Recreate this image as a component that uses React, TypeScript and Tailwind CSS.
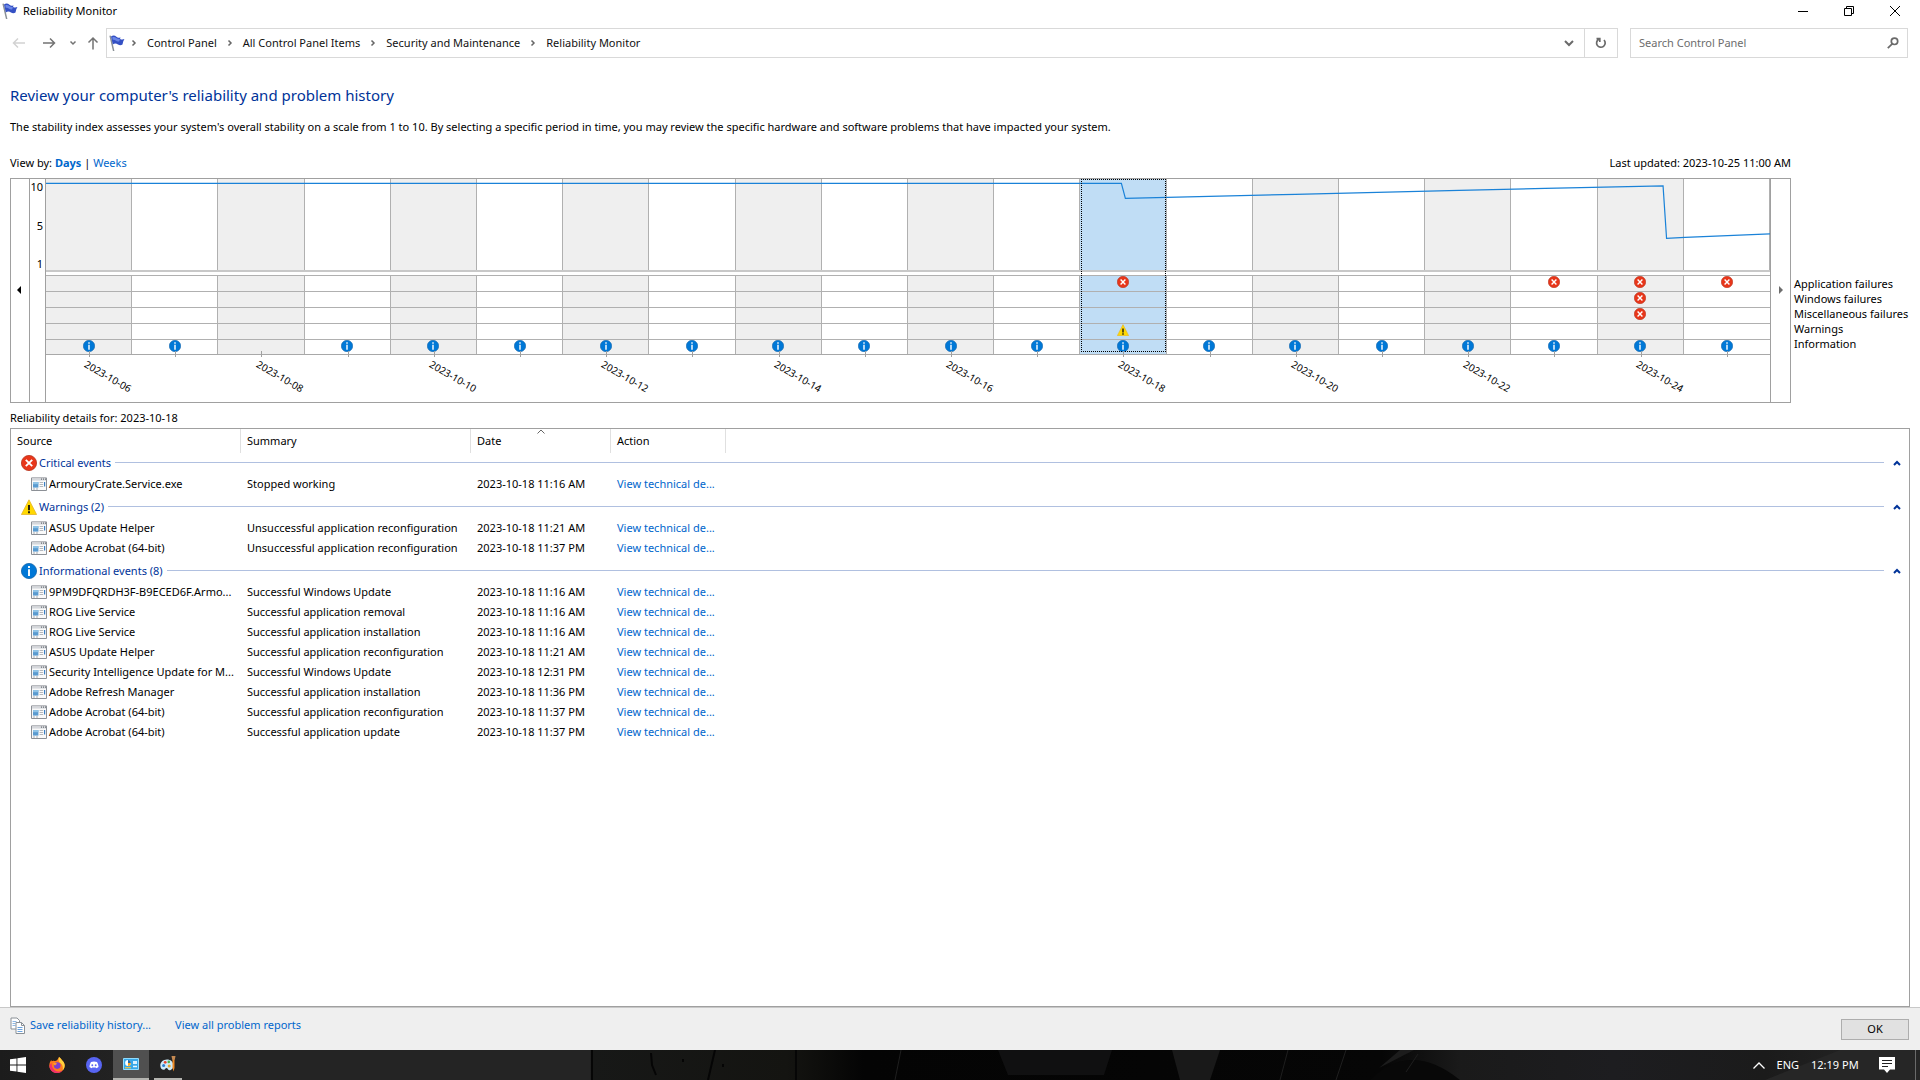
import type { ReactNode } from "react";

type Status = "critical" | "warning" | "info";

interface EventRow {
  source: string;
  summary: string;
  date: string;
}

interface EventGroup {
  status: Status;
  title: string;
  rows: EventRow[];
}

interface Day {
  label?: string;
  selected?: boolean;
  marks: (Status | null)[];
}

const none: null[] = [null, null, null, null];

const days: Day[] = [
  { label: "2023-10-06", marks: [...none, "info"] },
  { marks: [...none, "info"] },
  { label: "2023-10-08", marks: [...none, null] },
  { marks: [...none, "info"] },
  { label: "2023-10-10", marks: [...none, "info"] },
  { marks: [...none, "info"] },
  { label: "2023-10-12", marks: [...none, "info"] },
  { marks: [...none, "info"] },
  { label: "2023-10-14", marks: [...none, "info"] },
  { marks: [...none, "info"] },
  { label: "2023-10-16", marks: [...none, "info"] },
  { marks: [...none, "info"] },
  { label: "2023-10-18", selected: true, marks: ["critical", null, null, "warning", "info"] },
  { marks: [...none, "info"] },
  { label: "2023-10-20", marks: [...none, "info"] },
  { marks: [...none, "info"] },
  { label: "2023-10-22", marks: [...none, "info"] },
  { marks: ["critical", null, null, null, "info"] },
  { label: "2023-10-24", marks: ["critical", "critical", "critical", null, "info"] },
  { marks: ["critical", null, null, null, "info"] },
];

const groups: EventGroup[] = [
  {
    status: "critical",
    title: "Critical events",
    rows: [{ source: "ArmouryCrate.Service.exe", summary: "Stopped working", date: "2023-10-18 11:16 AM" }],
  },
  {
    status: "warning",
    title: "Warnings (2)",
    rows: [
      { source: "ASUS Update Helper", summary: "Unsuccessful application reconfiguration", date: "2023-10-18 11:21 AM" },
      { source: "Adobe Acrobat (64-bit)", summary: "Unsuccessful application reconfiguration", date: "2023-10-18 11:37 PM" },
    ],
  },
  {
    status: "info",
    title: "Informational events (8)",
    rows: [
      { source: "9PM9DFQRDH3F-B9ECED6F.Armo...", summary: "Successful Windows Update", date: "2023-10-18 11:16 AM" },
      { source: "ROG Live Service", summary: "Successful application removal", date: "2023-10-18 11:16 AM" },
      { source: "ROG Live Service", summary: "Successful application installation", date: "2023-10-18 11:16 AM" },
      { source: "ASUS Update Helper", summary: "Successful application reconfiguration", date: "2023-10-18 11:21 AM" },
      { source: "Security Intelligence Update for M...", summary: "Successful Windows Update", date: "2023-10-18 12:31 PM" },
      { source: "Adobe Refresh Manager", summary: "Successful application installation", date: "2023-10-18 11:36 PM" },
      { source: "Adobe Acrobat (64-bit)", summary: "Successful application reconfiguration", date: "2023-10-18 11:37 PM" },
      { source: "Adobe Acrobat (64-bit)", summary: "Successful application update", date: "2023-10-18 11:37 PM" },
    ],
  },
];

const legend = ["Application failures", "Windows failures", "Miscellaneous failures", "Warnings", "Information"];
const crumbs = ["Control Panel", "All Control Panel Items", "Security and Maintenance", "Reliability Monitor"];

function StatusIcon({ status, className }: { status: Status; className: string }) {
  if (status === "critical") {
    return (
      <svg viewBox="0 0 16 16" className={className} aria-label="Critical">
        <circle cx="8" cy="8" r="7.6" fill="#e8361a" stroke="#b8321c" strokeWidth="0.8" />
        <path d="M4.8 4.8l6.4 6.4M11.2 4.8l-6.4 6.4" stroke="#fff" strokeWidth="1.9" />
      </svg>
    );
  }
  if (status === "warning") {
    return (
      <svg viewBox="0 0 16 16" className={className} aria-label="Warning">
        <path d="M8 .8L15.6 15.5H.4z" fill="#ffd800" stroke="#e5b52a" strokeWidth="0.8" strokeLinejoin="round" />
        <path d="M8 6v5.2M8 12.2v2" stroke="#111" strokeWidth="1.8" />
      </svg>
    );
  }
  return (
    <svg viewBox="0 0 16 16" className={className} aria-label="Information">
      <circle cx="8" cy="8" r="7.6" fill="#0078d7" stroke="#1264ab" strokeWidth="0.8" />
      <path d="M8 3v1.9M8 6.2v6.8" stroke="#fff" strokeWidth="1.9" />
    </svg>
  );
}

function FlagIcon() {
  return (
    <svg viewBox="0 0 16 16" className="size-4 shrink-0" aria-hidden="true">
      <path d="M1.2 1.2L4.6 15.6" stroke="#8a9096" strokeWidth="1.5" strokeLinecap="round" />
      <path d="M2 1.4C4.2.2 5.8.4 7.4 1.8s3 1 4 .4l-.3 1.7c1.4.8 2.6.8 4.3.2-.9 1.6-1.6 3.4-1.9 5.4-1.5.9-3 .9-4.5 0-1.9-1.2-3.6-1.2-5.2.1z" fill="#3450c4" />
      <path d="M3.2 2.4c1.7-.7 2.9-.3 4.1.7 1.2.9 2.5 1.2 3.6.9l-.6 2.2c-1.3.4-2.4.1-3.6-.7-1-.7-1.8-.9-2.8-.6z" fill="#6a86e6" />
    </svg>
  );
}

function AppIcon() {
  return (
    <svg viewBox="0 0 16 14" className="h-3.5 w-4 shrink-0" aria-hidden="true">
      <path d="M.5.9h15v12.6H.5z" fill="#fafafa" stroke="#8c9096" />
      <path d="M1 1.4h14v2.2H1z" fill="#d5d8dc" />
      <path d="M10 2.1h1M12 2.1h1M14 2.1h1" stroke="#4c5258" />
      <path d="M2 5h5.4v5.6H2z" fill="#5a9bd0" />
      <path d="M2 5h5.4v2.2H2z" fill="#8fc3e6" />
      <path d="M8.6 5.5h3.6M8.6 7.5h3.6M8.6 9.5h3.6" stroke="#b4b8bd" />
      <path d="M13.6 5v4.5" stroke="#3a7fc4" strokeWidth="1.2" />
      <path d="M2 12h2M5 12h2" stroke="#a8adb3" />
    </svg>
  );
}

function NavIcon({ d, className }: { d: string; className: string }) {
  return (
    <svg viewBox="0 0 14 14" fill="none" stroke="currentColor" className={className} aria-hidden="true">
      <path d={d} />
    </svg>
  );
}

function IconButton({ label, className, children }: { label: string; className: string; children: ReactNode }) {
  return (
    <button type="button" aria-label={label} className={"flex items-center justify-center " + className}>
      {children}
    </button>
  );
}

function TitleBar() {
  return (
    <header className="flex h-[22px] items-center pr-0.5 pl-0.5">
      <FlagIcon />
      <span className="ml-[5px] leading-4">Reliability Monitor</span>
      <div className="ml-auto flex">
        <IconButton label="Minimize" className="h-5 w-[46px]">
          <svg viewBox="0 0 10 10" className="size-2.5" stroke="#000"><path d="M0 5.5h10" /></svg>
        </IconButton>
        <IconButton label="Restore" className="h-5 w-[46px]">
          <svg viewBox="0 0 10 10" className="size-2.5" stroke="#000" fill="none"><path d="M.5 2.5h7v7h-7zM2.5 2.5v-2h7v7h-2" /></svg>
        </IconButton>
        <IconButton label="Close" className="h-5 w-[46px]">
          <svg viewBox="0 0 10 10" className="size-2.5" stroke="#000"><path d="M0 0l10 10M10 0L0 10" /></svg>
        </IconButton>
      </div>
    </header>
  );
}

function AddressBar() {
  return (
    <nav className="flex h-[30px] items-stretch pr-3" aria-label="Address">
      <div className="flex w-[106px] shrink-0 items-center pl-3">
        <IconButton label="Back" className="w-3.5 text-[#d2d2d2]">
          <NavIcon d="M13 7H1.5M6 2.5L1.5 7 6 11.5" className="size-3.5 stroke-[1.5]" />
        </IconButton>
        <IconButton label="Forward" className="ml-4 w-3.5 text-[#737373]">
          <NavIcon d="M1 7h11.5M8 2.5L12.500 7 8 11.500" className="size-3.5 stroke-[1.5]" />
        </IconButton>
        <IconButton label="Recent locations" className="ml-2.5 w-3.5 text-[#737373]">
          <NavIcon d="M4.500 5.500L7 8l2.500-2.500" className="size-3.5 stroke-[1.5]" />
        </IconButton>
        <IconButton label="Up" className="ml-1.5 w-3.5 text-[#737373]">
          <NavIcon d="M7 13.500V2M2.500 6.500L7 2l4.500 4.500" className="size-3.5 stroke-[1.5]" />
        </IconButton>
      </div>
      <div className="flex flex-1 items-center border border-[#d9d9d9] pl-0.5">
        <FlagIcon />
        <ol className="-ml-1 flex items-center">
          {crumbs.map((crumb) => (
            <li key={crumb} className="flex items-center text-[#111]">
              <NavIcon d="M5.500 4.500L8 7l-2.500 2.500" className="mx-1.5 size-3.5 stroke-[1.5] text-[#666]" />
              <a href="#" className="leading-4">{crumb}</a>
            </li>
          ))}
        </ol>
        <IconButton label="Previous locations" className="ml-auto w-[30px] text-[#6a6a6a]">
          <NavIcon d="M3 5l4 4 4-4" className="size-3.5 stroke-2" />
        </IconButton>
      </div>
      <IconButton label="Refresh" className="w-[34px] border border-[#d9d9d9] -ml-px text-[#6a6a6a]">
        <NavIcon d="M4.800 3.200A4.300 4.300 0 1 0 10 4M2.500 2.700h3.300v3.300" className="size-3.5 stroke-[1.7]" />
      </IconButton>
      <div className="ml-3 flex w-[278px] items-center border border-[#d9d9d9] pr-2 pl-2">
        <input
          type="search"
          aria-label="Search Control Panel"
          placeholder="Search Control Panel"
          className="min-w-0 flex-1 leading-4 outline-none placeholder:text-[#6d6d6d]"
        />
        <svg viewBox="0 0 12 12" className="size-3" fill="none" stroke="#6a6a6a" strokeWidth="1.700" aria-hidden="true">
          <circle cx="7.500" cy="4.300" r="3.200" />
          <path d="M5.200 6.800L.8 11.200" />
        </svg>
      </div>
    </nav>
  );
}

function dayFill(day: Day, index: number) {
  if (day.selected) return "bg-[#c0ddf5]";
  return index % 2 === 0 ? "bg-[#efefef]" : "bg-white";
}

function StabilityChart() {
  return (
    <section aria-label="Stability chart" className="flex h-[225px] min-w-0 flex-1 border border-[#a0a0a0]">
      <IconButton label="Earlier" className="w-[19px] border-r border-[#a0a0a0] pr-0.5 pb-0.5">
        <svg viewBox="0 0 4 8" className="h-2 w-1"><path d="M4 0v8L0 4z" fill="#000" /></svg>
      </IconButton>
      <div className="flex h-[93px] w-[15px] flex-col items-end justify-between pr-0.5 leading-4">
        <span>10</span>
        <span>5</span>
        <span>1</span>
      </div>
      <div className="min-w-0 flex-1 border-x border-[#a0a0a0]">
        <div className="relative">
          <div className="relative grid h-[93px] grid-cols-20 border-b-2 border-[#c8c8c8]">
            {days.map((day, i) => (
              <div key={i} className={"border-[#b0b0b0] not-last:border-r " + dayFill(day, i)} />
            ))}
            <svg viewBox="0 0 1725 92" preserveAspectRatio="none" className="absolute inset-0 size-full" aria-hidden="true">
              <path
                d="M0 4.500H1076L1080 19.500L1250 15.500L1414 11.500L1500 9.500L1618 7L1621.500 60L1640 59L1725 55.500"
                fill="none"
                stroke="#1a82d8"
                strokeWidth="1.200"
                vectorEffect="non-scaling-stroke"
              />
            </svg>
          </div>
          <div className="mt-[3px] grid grid-cols-20 border-b border-[#a8a8a8]">
            {days.map((day, i) => (
              <div key={i} className={"border-[#b0b0b0] not-last:border-r " + dayFill(day, i)}>
                {day.marks.map((mark, row) => (
                  <div key={row} className="flex h-4 justify-center border-t border-[#b0b0b0] last:h-[15px]">
                    {mark && <StatusIcon status={mark} className="size-3" />}
                  </div>
                ))}
              </div>
            ))}
          </div>
          <div className="absolute inset-0 grid grid-cols-20 pb-[3px]" aria-hidden="true">
            <div className="col-start-13 mr-px ml-px border border-dotted border-black" />
          </div>
        </div>
        <div className="grid grid-cols-20">
          {days.map((day, i) => (
            <div key={i} className="relative">
              <span className="absolute -top-1 left-1/2 h-1.5 w-px bg-[#a0a0a0]" />
              {day.label && (
                <span className="absolute top-0.5 left-1/2 origin-top-left rotate-30 text-[10px] leading-[15px] whitespace-nowrap">
                  {day.label}
                </span>
              )}
            </div>
          ))}
        </div>
      </div>
      <IconButton label="Later" className="w-[19px] pb-0.5">
        <svg viewBox="0 0 4 8" className="h-2 w-1"><path d="M0 0v8l4-4z" fill="#6d6d6d" /></svg>
      </IconButton>
    </section>
  );
}

function DetailsTable() {
  return (
    <div className="mt-0.5 flex-1 border border-[#a0a0a0]">
      <table className="w-full table-fixed border-separate border-spacing-0 text-left whitespace-nowrap">
        <colgroup>
          <col className="w-[230px]" />
          <col className="w-[230px]" />
          <col className="w-[140px]" />
          <col className="w-[115px]" />
          <col />
        </colgroup>
        <thead>
          <tr className="h-6">
            <th className="border-r border-[#e0e0e0] px-1.5 py-0 font-normal">Source</th>
            <th className="border-r border-[#e0e0e0] px-1.5 py-0 font-normal">Summary</th>
            <th className="relative border-r border-[#e0e0e0] px-1.5 py-0 font-normal" aria-sort="ascending">
              Date
              <svg viewBox="0 0 8 5" className="absolute top-0 left-1/2 h-[5px] w-2 -translate-x-1/2" fill="none" stroke="#666">
                <path d="M.5 4.500L4 1l3.500 3.500" />
              </svg>
            </th>
            <th className="border-r border-[#e0e0e0] px-1.5 py-0 font-normal">Action</th>
            <td />
          </tr>
        </thead>
        {groups.map((group, g) => (
          <tbody key={group.title}>
            <tr className={g === 0 ? "h-[21px]" : "h-6"}>
              <th colSpan={5} scope="rowgroup" className="p-0 align-bottom font-normal">
                <div className="flex h-[21px] items-center pr-[5px] pb-0.5 pl-2.5">
                  <StatusIcon status={group.status} className="size-4 shrink-0" />
                  <span className="ml-0.5 leading-4 text-[#003399]">{group.title}</span>
                  <span className="ml-1 h-px flex-1 bg-[#b0c0e0]" />
                  <IconButton label={"Collapse " + group.title} className="ml-1.5 h-4 w-3.5">
                    <svg viewBox="0 0 8 6" className="h-1.5 w-2" fill="none" stroke="#003399" strokeWidth="2"><path d="M1 5l3-3 3 3" /></svg>
                  </IconButton>
                </div>
              </th>
            </tr>
            {group.rows.map((row, r) => (
              <tr key={r} className="h-5">
                <td className="p-0">
                  <div className="flex items-center gap-0.5 pl-5">
                    <AppIcon />
                    {row.source}
                  </div>
                </td>
                <td className="px-1.5 py-0">{row.summary}</td>
                <td className="px-1.5 py-0">{row.date}</td>
                <td className="px-1.5 py-0">
                  <a href="#" className="text-[#0066cc]">View technical de...</a>
                </td>
                <td className="p-0" />
              </tr>
            ))}
          </tbody>
        ))}
      </table>
    </div>
  );
}

function Footer() {
  return (
    <footer className="flex h-[43px] items-center border-t border-[#c8c8c8] bg-[#efefef] pr-[11px] pl-2.5">
      <div className="flex items-center pb-2 text-[#0066cc]">
        <svg viewBox="0 0 16 17" className="h-[17px] w-4" aria-hidden="true">
          <path d="M1 1h6l2.500 2.500V12H1z" fill="#fff" stroke="#8a9096" />
          <path d="M2.500 4.500h4M2.500 6.500h3M2.500 8.500h3" stroke="#8eb8e4" />
          <path d="M6 5.500h5.500L14.500 8.500v8H6z" fill="#fff" stroke="#8a9096" />
          <path d="M11.500 5.500v3h3" fill="none" stroke="#8a9096" />
          <path d="M7.500 10.500h5M7.500 12.500h5M7.500 14.500h5" stroke="#6aa2de" />
        </svg>
        <a href="#" className="ml-1 leading-4">Save reliability history...</a>
        <a href="#" className="ml-6 leading-4">View all problem reports</a>
      </div>
      <button type="button" className="ml-auto h-[21px] w-[68px] border border-[#adadad] bg-[#e1e1e1] leading-4">OK</button>
    </footer>
  );
}

function Taskbar() {
  return (
    <div className="relative flex h-[30px] bg-[#1f1f1f] text-white">
      <svg viewBox="0 0 1920 30" preserveAspectRatio="none" className="absolute inset-0 size-full" aria-hidden="true">
        <defs>
          <linearGradient id="wall">
            <stop offset="0" stopColor="#1c1c1c" />
            <stop offset="0.080" stopColor="#242424" />
            <stop offset="0.307" stopColor="#242424" />
            <stop offset="0.309" stopColor="#171817" />
            <stop offset="0.410" stopColor="#141411" />
            <stop offset="0.450" stopColor="#040404" />
            <stop offset="0.600" stopColor="#050505" />
            <stop offset="0.720" stopColor="#060606" />
            <stop offset="0.760" stopColor="#1a1a1a" />
            <stop offset="0.840" stopColor="#1d1d20" />
            <stop offset="0.920" stopColor="#1b1b1b" />
            <stop offset="1" stopColor="#282828" />
          </linearGradient>
        </defs>
        <path d="M0 0h1920v30H0z" fill="url(#wall)" />
        <path d="M998 0h114l-8 25h-96z" fill="#101011" />
        <path d="M1172 0h48l-10 30h-30z" fill="#191919" />
        <path d="M1400 0h14l-35 18z" fill="#1c1c1c" />
        <path d="M1370 30q40-40 90 0z" fill="#080808" />
        <path d="M1765 30L1840 0h80v30z" fill="#262626" />
        <path d="M592 0v30M796 0v30" stroke="#060606" strokeWidth="2" />
        <path d="M651 3l1 12 4 10M683 9v3M723 14v3M715 0l-7 30" fill="none" stroke="#050505" strokeWidth="2" />
        <path d="M1288 0l-8 30M1346 0l-10 30M1418 4l-12 18M901 0l-6 30" stroke="#1e1e1e" />
      </svg>
      <IconButton label="Start" className="relative w-9">
        <svg viewBox="0 0 16 16" className="size-4" fill="#fff">
          <path d="M0 2.300L6.500 1.400v6.100H0zM7.400 1.300L16 0v7.500H7.400zM0 8.400h6.500v6.200L0 13.700zM7.400 8.400H16V16l-8.600-1.200z" />
        </svg>
      </IconButton>
      <IconButton label="Firefox" className="relative ml-[3px] w-9">
        <svg viewBox="0 0 16 16" className="size-4">
          <path d="M10 0c1.500 1 2 2 3 3.200 1.400 1.400 2.700 3 2.700 5.300A7.700 7.500 0 0 1 .3 8.400C.3 6 1.300 4 2.300 3l.4 1.300C3.600 3.500 4.600 3.500 5.500 4 7.800 4.300 9 2 10 0z" fill="#ff7a1f" />
          <path d="M10 0c1.500 1 2 2 3 3.200 1.400 1.400 2.700 3 2.700 5.300 0 2-.8 3.800-2 5 .5-3.600-.2-6-2-7.200C9.600 5 9 3 10 0z" fill="#ffd23c" />
          <path d="M.4 9.500C1 13.500 4 16 8 16c2.500 0 4.400-1 5.800-2.600-3 1.600-6 1.300-8.300-.5C3.300 11.300 2.500 8.500 2.600 6 1.500 7 .6 8 .4 9.500z" fill="#f0306a" />
          <circle cx="8.200" cy="8.600" r="3.300" fill="#7a3fd0" />
          <path d="M4.200 6.300c1.600-.9 3-.4 4 .6-1 .2-1.500.8-2 1.700-.8-.3-1.600-1-2-2.300z" fill="#ff9a2a" />
        </svg>
      </IconButton>
      <IconButton label="Discord" className="relative ml-px w-9">
        <svg viewBox="0 0 16 16" className="size-4">
          <circle cx="8" cy="8" r="8" fill="#5865f2" />
          <path d="M5 4.900c2-.7 4-.7 6 0 .9 1.500 1.500 3.200 1.500 5-.8.700-1.600 1.100-2.500 1.300l-.6-1c-1 .3-1.900.3-2.800 0l-.6 1c-.9-.2-1.700-.6-2.500-1.300 0-1.800.6-3.500 1.500-5z" fill="#fff" />
          <circle cx="6.300" cy="8.200" r="0.950" fill="#5865f2" />
          <circle cx="9.700" cy="8.200" r="0.950" fill="#5865f2" />
        </svg>
      </IconButton>
      <IconButton label="Control Panel" className="relative ml-px w-9 border-b-2 border-[#b4b4b0] bg-[#505050]">
        <svg viewBox="0 0 16 12" className="h-3 w-4">
          <path d="M.5.5h15v11H.5z" fill="#38a8e8" stroke="#8fdcff" />
          <circle cx="5" cy="5" r="2.900" fill="#fff" />
          <path d="M5 5V2.100A2.900 2.900 0 0 1 7.900 5z" fill="#1c6ab0" />
          <path d="M5 5h2.900A2.900 2.900 0 0 1 5 7.900z" fill="#f5a623" />
          <path d="M10 3h4v3h-4z" fill="#d8f1ff" />
          <path d="M2 9.700h6" stroke="#f5c542" strokeWidth="1.200" />
          <path d="M10 8.500h4" stroke="#e8f8ff" strokeWidth="1.500" />
        </svg>
      </IconButton>
      <IconButton label="Paint" className="relative ml-[5px] w-7 border-b-2 border-[#b4b4b0]">
        <svg viewBox="0 0 16 16" className="size-4">
          <path d="M7 3.500C3 3.500.3 6.300.3 9.500c0 3 2 4.700 4 4.200 1-.3 1-1.700 2.200-1.700 1.400 0 1 2 2.800 2.200 2.400.1 4.200-2.500 4-5.300C13.100 5.700 10.600 3.500 7 3.500z" fill="#cdeaf8" />
          <circle cx="3.600" cy="9.600" r="1.500" fill="#2b7fd0" />
          <circle cx="5.200" cy="6.300" r="1.400" fill="#e8452c" />
          <circle cx="8.800" cy="5.900" r="1.300" fill="#48b04c" />
          <circle cx="9.200" cy="10" r="1.500" fill="#e8a52c" />
          <path d="M11.500 0h4l-.8 4h-2.400z" fill="#c58a52" />
          <path d="M12.500 4h2v8l-1 3.500-1-3.500z" fill="#f08a24" />
        </svg>
      </IconButton>
      <div className="relative ml-auto flex items-center">
        <IconButton label="Show hidden icons" className="h-full w-6">
          <svg viewBox="0 0 12 7" className="h-[7px] w-3" fill="none" stroke="#fff" strokeWidth="1.300"><path d="M.5 6.500L6 1l5.500 5.500" /></svg>
        </IconButton>
        <span className="ml-1.5 leading-4">ENG</span>
        <span className="ml-3 w-12 leading-4 whitespace-nowrap">12:19 PM</span>
        <IconButton label="Notifications" className="mr-1 ml-1 h-full w-12">
          <svg viewBox="0 0 16 16" className="size-4">
            <path d="M0 0h16v12.500h-5L8 16l-3-3.500H0z" fill="#fff" />
            <path d="M3 3.500h10M3 6.500h10M3 9.500h6" stroke="#222" />
          </svg>
        </IconButton>
        <span className="h-full w-[5px] border-l border-[#6a6a6a]" />
      </div>
    </div>
  );
}

export default function App() {
  return (
    <div className="flex min-h-screen flex-col bg-white font-['Noto_Sans','Open_Sans',sans-serif] text-[11px] leading-4 text-black">
      <TitleBar />
      <div className="pt-1.5">
        <AddressBar />
      </div>
      <main className="flex flex-1 flex-col px-2.5 pt-[27px]">
        <h1 className="text-[15px] leading-5 text-[#003399]">Review your computer's reliability and problem history</h1>
        <p className="mt-3.5">
          The stability index assesses your system's overall stability on a scale from 1 to 10. By selecting a specific
          period in time, you may review the specific hardware and software problems that have impacted your system.
        </p>
        <div className="mt-5 grid grid-cols-[1fr_116px] gap-x-[3px] gap-y-[7px]">
          <div className="flex justify-between">
            <div>
              View by: <a href="#" className="font-bold text-[#0066cc]">Days</a> |{" "}
              <a href="#" className="text-[#0066cc]">Weeks</a>
            </div>
            <div>Last updated: 2023-10-25 11:00 AM</div>
          </div>
          <div />
          <StabilityChart />
          <ul className="pt-[98px] leading-[15px] whitespace-nowrap">
            {legend.map((item) => (
              <li key={item}>{item}</li>
            ))}
          </ul>
        </div>
        <h2 className="mt-[7px]">Reliability details for: 2023-10-18</h2>
        <DetailsTable />
      </main>
      <Footer />
      <Taskbar />
    </div>
  );
}
